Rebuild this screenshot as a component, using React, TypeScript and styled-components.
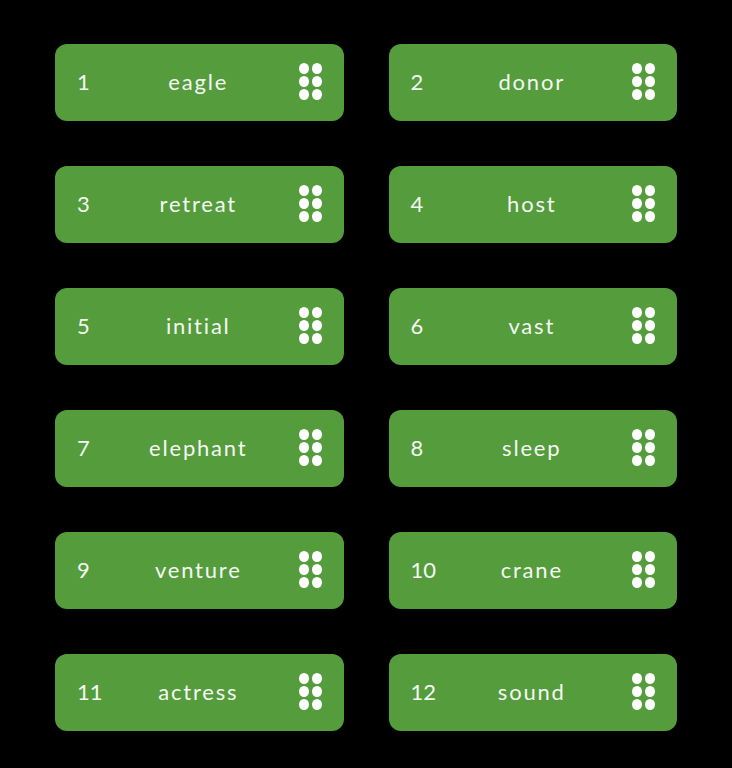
import styled, { createGlobalStyle } from "styled-components";

const words = [
  "eagle", "donor", "retreat", "host", "initial", "vast",
  "elephant", "sleep", "venture", "crane", "actress", "sound",
];

const GlobalStyle = createGlobalStyle`
  html, body {
    margin: 0;
    padding: 0;
    background: #000;
  }
  body {
    font-family: Lato, "Noto Sans", sans-serif;
  }
`;

const Page = styled.div`
  padding: 44px 55px;
  display: grid;
  grid-template-columns: 1fr 1fr;
  column-gap: 45px;
  row-gap: 45px;
`;

const Card = styled.div`
  height: 77px;
  box-sizing: border-box;
  padding: 0 22px 2px 22px;
  border-radius: 12px;
  background: #559c3d;
  display: grid;
  grid-template-columns: 1fr auto 1fr;
  align-items: center;
  color: #f4f8f2;
`;

const Num = styled.span`
  justify-self: start;
  font-size: 22px;
`;

const Word = styled.span`
  font-size: 22px;
  letter-spacing: 1.8px;
  margin-left: -2px;
`;

const Dots = styled.div`
  justify-self: end;
  display: grid;
  grid-template-columns: 10px 10px;
  column-gap: 3px;
  row-gap: 2px;
`;

const Dot = styled.span`
  width: 10px;
  height: 11px;
  border-radius: 50%;
  background: #fff;
`;

export default function App() {
  return (
    <>
      <GlobalStyle />
      <Page>
        {words.map((w, i) => (
          <Card key={w}>
            <Num>{i + 1}</Num>
            <Word>{w}</Word>
            <Dots>
              {Array.from({ length: 6 }).map((_, j) => (
                <Dot key={j} />
              ))}
            </Dots>
          </Card>
        ))}
      </Page>
    </>
  );
}
